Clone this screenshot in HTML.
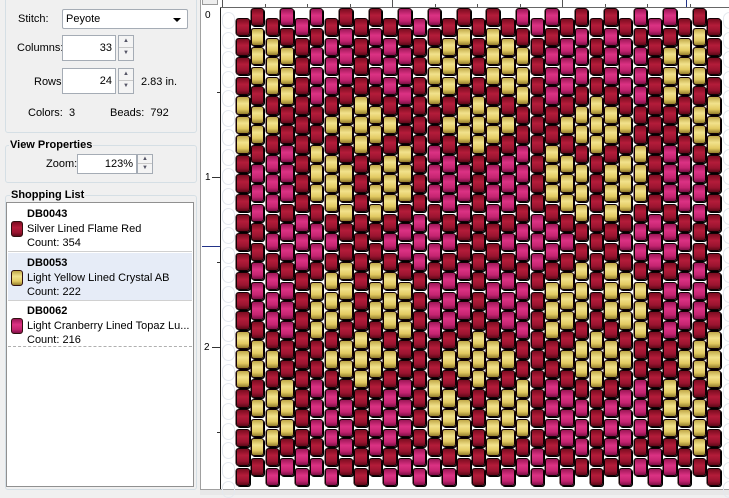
<!DOCTYPE html>
<html><head><meta charset="utf-8">
<style>
*{margin:0;padding:0;box-sizing:border-box}
body{width:729px;height:495px;overflow:hidden;background:#f0f0f0;font-family:"Liberation Sans",sans-serif;font-size:11px;color:#000;position:relative}
.a{position:absolute}
.grp{position:absolute;border:1px solid #d5dfe5;border-radius:3px}
.inp{position:absolute;background:#fff;border:1px solid #a5acb5;text-align:right;padding-right:3px;font-size:11px}
.spin{position:absolute;width:16px;border:1px solid #a5acb5;background:#f4f4f4}
.spin div{height:50%;border-bottom:1px solid #c8c8c8;text-align:center;font-size:6px;color:#556;line-height:10px}
.b{font-weight:bold}
.item{position:absolute;left:8px;width:184px;height:48px;border-bottom:1px solid #d0d0d0}
.sw{position:absolute;left:3px;top:17px;width:12px;height:16px;border:1px solid #301010;border-radius:3px}
.item span{position:absolute;left:19px}
.bead{position:absolute;width:13.6px;height:18.4px;border:1px solid #120004;border-radius:3px;box-shadow:1px 1px 0 #000,-0.5px 0 0 #200}
.R{background:linear-gradient(#7a0c20,#b41c3a 40%,#9a1430 75%,#5e0818)}
.Y{background:linear-gradient(#c0a848,#f2e28c 38%,#e2ca62 72%,#947e2c)}
.P{background:linear-gradient(#9c1656,#dc3284 40%,#c42470 75%,#7e1046)}
</style></head><body>

<div class="grp" style="left:5px;top:-4px;width:192px;height:137px"></div>
<div class="a" style="left:18px;top:13px">Stitch:</div>
<div class="a" style="left:62px;top:9px;width:126px;height:20px;background:#fff;border:1px solid #a5acb5;border-radius:2px;padding:3px 0 0 3px">Peyote<div class="a" style="right:6px;top:8px;width:0;height:0;border-left:4px solid transparent;border-right:4px solid transparent;border-top:4px solid #000"></div></div>
<div class="a" style="left:17px;top:42px">Columns:</div>
<div class="inp" style="left:62px;top:35px;width:54px;height:26px;padding-top:6px">33</div>
<div class="spin" style="left:118px;top:35px;height:26px"><div>▲</div><div style="border:0">▼</div></div>
<div class="a" style="left:34px;top:76px">Rows:</div>
<div class="inp" style="left:62px;top:68px;width:54px;height:26px;padding-top:6px">24</div>
<div class="spin" style="left:118px;top:68px;height:26px"><div>▲</div><div style="border:0">▼</div></div>
<div class="a" style="left:141px;top:76px">2.83 in.</div>
<div class="a" style="left:28px;top:107px">Colors:&nbsp; 3</div>
<div class="a" style="left:110px;top:107px">Beads:&nbsp; 792</div>

<div class="grp" style="left:5px;top:145px;width:192px;height:38px"></div>
<div class="a b" style="left:9px;top:139px;background:#f0f0f0;padding:0 1px">View Properties</div>
<div class="a" style="left:46px;top:158px">Zoom:</div>
<div class="inp" style="left:77px;top:154px;width:60px;height:20px;padding-top:3px">123%</div>
<div class="spin" style="left:137px;top:154px;height:20px"><div style="line-height:8px">▲</div><div style="border:0;line-height:8px">▼</div></div>

<div class="grp" style="left:5px;top:195px;width:192px;height:295px"></div>
<div class="a b" style="left:10px;top:189px;background:#f0f0f0;padding:0 1px">Shopping List</div>
<div class="a" style="left:6px;top:202px;width:188px;height:285px;background:#fff;border:1px solid #909090"></div>
<div class="item" style="top:204px"><div class="sw R"></div><span class="b" style="top:4px">DB0043</span><span style="top:19px">Silver Lined Flame Red</span><span style="top:33px">Count: 354</span></div>
<div class="item" style="top:253px;background:#e6ecf7"><div class="sw Y"></div><span class="b" style="top:4px">DB0053</span><span style="top:19px">Light Yellow Lined Crystal AB</span><span style="top:33px">Count: 222</span></div>
<div class="item" style="top:301px;height:46px;border-bottom:1px dashed #b0b0b0"><div class="sw P"></div><span class="b" style="top:4px">DB0062</span><span style="top:19px">Light Cranberry Lined Topaz Lu...</span><span style="top:33px">Count: 216</span></div>

<div class="a" style="left:200px;top:0;width:529px;height:495px;background:#fff;border-left:1px solid #a0a0a0"></div>
<div class="a" style="left:200px;top:489px;width:529px;height:6px;background:#e8e8e8;border-top:1px solid #a0a0a0"></div>
<div class="a" style="left:220px;top:8px;width:1px;height:481px;background:#222"></div>
<div class="a" style="left:220px;top:7px;width:509px;height:1px;background:#666"></div>
<div class="a" style="left:202px;top:0;width:16px;height:5px;border:1px solid #999;border-top:0;background:#eee"></div>
<div class="a" style="left:205px;top:10px;font-size:10px">0</div>
<div class="a" style="left:205px;top:172px;font-size:10px">1</div>
<div class="a" style="left:204px;top:342px;font-size:10px">2</div>
<div class="a" style="left:212px;top:177px;width:8px;height:1px;background:#333"></div>
<div class="a" style="left:212px;top:347px;width:8px;height:1px;background:#333"></div>
<div class="a" style="left:217px;top:92px;width:3px;height:1px;background:#333"></div>
<div class="a" style="left:217px;top:262px;width:3px;height:1px;background:#333"></div>
<div class="a" style="left:217px;top:432px;width:3px;height:1px;background:#333"></div>
<div class="a" style="left:202px;top:246px;width:18px;height:1px;background:#223388"></div>
<div class="a" style="left:686px;top:0;width:1px;height:7px;background:#223388"></div>
<div id="ticks"></div>
<div id="g"></div>

<script>
var base=[
"RRRRYYYRRRRR",
"RAAARYYRBBBR",
"RAAARYRBBBRP",
"PRAAARRBBBRP",
"PRRRRRRRRRPP",
"PRBBBRRAAARP",
"RBBBRYRAAARP",
"RBBBRYYRAAAR",
"RRRRYYYRRRRR"];
var h='';
for(var r=0;r<25;r++){
 h+='<div class="a" style="left:222px;top:'+(12+19.55*r).toFixed(1)+'px;width:13px;height:17px;border:1px solid #e4e8ee;border-radius:7px"></div>';
 h+='<div class="a" style="left:723px;top:'+(12+19.55*r).toFixed(1)+'px;width:13px;height:17px;border:1px solid #e4e8ee;border-radius:7px"></div>';
}
for(var c=0;c<33;c++){
 var m=c%16; if(m>8)m=16-m;
 var x=236.2+14.72*c;
 for(var r=0;r<24;r++){
  var k=base[m][r%12], col;
  if(k=='A') col = r<12?'Y':'P';
  else if(k=='B') col = r<12?'P':'Y';
  else col=k;
  var y=(c%2==0?18:8)+19.55*r;
  h+='<div class="bead '+col+'" style="left:'+x.toFixed(1)+'px;top:'+y.toFixed(1)+'px"></div>';
 }
}
document.getElementById('g').innerHTML=h;
var t='';
for(var i=0;i<13;i++){var x=222+42.5*i;t+='<div class="a" style="left:'+x+'px;top:'+(i%4==0?0:4)+'px;width:1px;height:'+(i%4==0?7:3)+'px;background:#555"></div>';}
document.getElementById('ticks').innerHTML=t;
</script>
</body></html>
